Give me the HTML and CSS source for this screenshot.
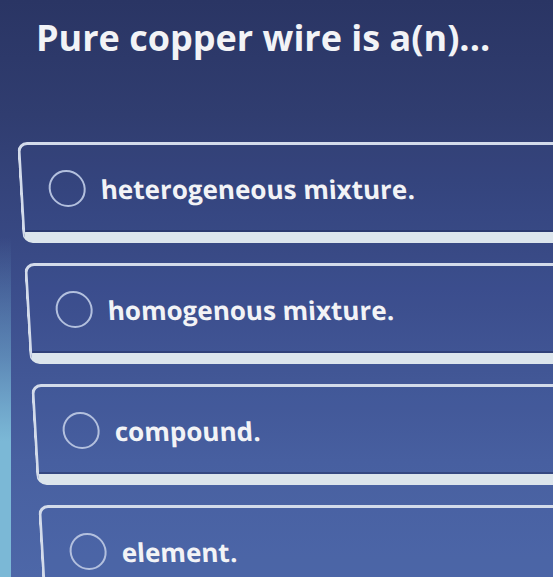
FILE: index.html
```html
<!DOCTYPE html>
<html>
<head>
<meta charset="utf-8">
<link rel="stylesheet" href="styles.css">
</head>
<body>
<div class="screen">
  <h1 class="question">Pure copper wire is a(n)...</h1>
  <div class="options">
    <div class="option"><span class="radio"></span><span class="label">heterogeneous mixture.</span></div>
    <div class="option"><span class="radio"></span><span class="label">homogenous mixture.</span></div>
    <div class="option"><span class="radio"></span><span class="label">compound.</span></div>
    <div class="option"><span class="radio"></span><span class="label">element.</span></div>
  </div>
</div>
</body>
</html>
```

FILE: styles.css
```css
html, body {
  margin: 0;
  padding: 0;
  height: 100%;
  overflow: hidden;
}
body {
  background:
    linear-gradient(to bottom, rgba(120,180,215,0) 0%, rgba(120,185,215,0.5) 35%, #7bb8d6 60%) left bottom / 11px 340px no-repeat,
    linear-gradient(to bottom, #2a3564 0%, #303d70 20%, #3b4d8b 50%, #4860a0 80%, #4d67a8 100%);
  font-family: "Open Sans", "DejaVu Sans", sans-serif;
  color: #f2f3f6;
}
.screen {
  display: flex;
  flex-direction: column;
}
.question {
  margin: 0;
  padding: 16px 0 0 36px;
  height: 120px;
  box-sizing: border-box;
  font-size: 36px;
  font-weight: 700;
  line-height: 44px;
  letter-spacing: 0;
}
.options {
  display: flex;
  flex-direction: column;
  gap: 20px;
  padding-left: 17px;
  margin-top: 22px;
  margin-right: -40px;
  transform: skewX(3.3deg);
  transform-origin: 0 0;
}
.option {
  display: flex;
  align-items: center;
  gap: 15px;
  height: 101px;
  box-sizing: border-box;
  border: 3px solid #d3dbea;
  border-bottom-width: 11px;
  border-bottom-color: #dce5ec;
  border-radius: 10px;
  padding-left: 26px;
  background: rgba(60,90,170,0.08);
  box-shadow: inset 0 -2px 0 rgba(20,30,70,0.35);
}
.radio {
  width: 33px;
  height: 33px;
  flex: none;
  border: 2px solid #b3c0de;
  border-radius: 50%;
}
.label {
  font-size: 26px;
  font-weight: 700;
  line-height: 1;
}
```
